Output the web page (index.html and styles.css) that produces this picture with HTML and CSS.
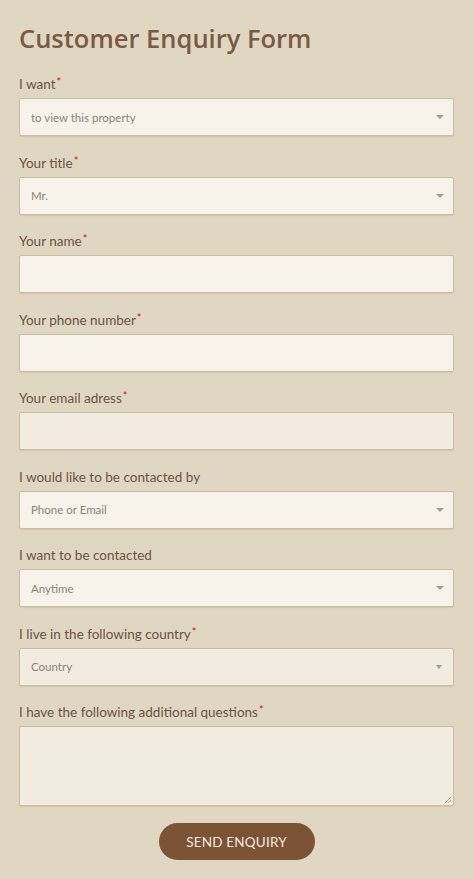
FILE: index.html
```html
<!DOCTYPE html>
<html lang="en">
<head>
<meta charset="utf-8">
<title>Customer Enquiry Form</title>
<link rel="stylesheet" href="styles.css">
</head>
<body>
<form class="form">
  <h1 class="title">Customer Enquiry Form</h1>

  <div class="group">
    <div class="label">I want<span class="req">*</span></div>
    <div class="field select"><span class="value">to view this property</span><span class="caret"></span></div>
  </div>

  <div class="group">
    <div class="label">Your title<span class="req">*</span></div>
    <div class="field select"><span class="value">Mr.</span><span class="caret"></span></div>
  </div>

  <div class="group">
    <div class="label">Your name<span class="req">*</span></div>
    <div class="field"></div>
  </div>

  <div class="group">
    <div class="label">Your phone number<span class="req">*</span></div>
    <div class="field"></div>
  </div>

  <div class="group">
    <div class="label">Your email adress<span class="req">*</span></div>
    <div class="field dim"></div>
  </div>

  <div class="group">
    <div class="label">I would like to be contacted by</div>
    <div class="field select"><span class="value">Phone or Email</span><span class="caret"></span></div>
  </div>

  <div class="group">
    <div class="label">I want to be contacted</div>
    <div class="field select"><span class="value">Anytime</span><span class="caret"></span></div>
  </div>

  <div class="group">
    <div class="label">I live in the following country<span class="req">*</span></div>
    <div class="field select dim"><span class="value">Country</span><span class="caret small"></span></div>
  </div>

  <div class="group">
    <div class="label">I have the following additional questions<span class="req">*</span></div>
    <div class="field area dim"><span class="grip"></span></div>
  </div>

  <div class="actions">
    <button type="button" class="btn">SEND ENQUIRY</button>
  </div>
</form>
</body>
</html>
```

FILE: styles.css
```css
* { box-sizing: border-box; }
html, body { margin: 0; padding: 0; }
body {
  background: #e0d7c2;
  font-family: "Lato", "Noto Sans", sans-serif;
  width: 474px;
  height: 879px;
  overflow: hidden;
}
.form {
  padding: 18px 20px 0 19px;
  display: flex;
  flex-direction: column;
}
.title {
  margin: 0 0 16px 0;
  font-family: "Open Sans", "Noto Sans", sans-serif;
  font-weight: 600;
  font-size: 25.5px;
  line-height: 40px;
  color: #7a5a44;
}
.group {
  display: flex;
  flex-direction: column;
  margin-bottom: 16.5px;
}
.label {
  font-size: 13.5px;
  line-height: 20px;
  height: 20px;
  color: #6d5242;
  margin-bottom: 4px;
}
.req {
  color: #d0111b;
  font-size: 11px;
  line-height: 0;
  position: relative;
  top: -3px;
  margin-left: 1px;
}
.field {
  position: relative;
  height: 38px;
  background: #f7f3eb;
  border: 1px solid #cdbd9f;
  border-radius: 2px;
  box-shadow: 0 1px 1px rgba(120, 95, 60, 0.15);
  display: flex;
  align-items: center;
  padding: 0 9px 0 11px;
}
.field.dim { background: #f1ebe0; }
.field.area { height: 80px; }
.value {
  flex: 1;
  font-size: 11.5px;
  color: #8d8279;
}
.caret {
  width: 0;
  height: 0;
  border-left: 4px solid transparent;
  border-right: 4px solid transparent;
  border-top: 4px solid #a49c94;
}
.caret.small {
  border-left-width: 3px;
  border-right-width: 3px;
  border-top-width: 4px;
  margin-right: 2px;
}
.grip {
  position: absolute;
  right: 2px;
  bottom: 2px;
  width: 6px;
  height: 6px;
  background: linear-gradient(135deg, transparent 45%, #b5a995 45%, #b5a995 55%, transparent 55%, transparent 70%, #b5a995 70%, #b5a995 80%, transparent 80%);
}
.actions {
  display: flex;
  justify-content: center;
  margin-top: 0.5px;
}
.btn {
  width: 156px;
  height: 37px;
  border: none;
  border-radius: 19px;
  background: #7d5336;
  color: #f4ebe0;
  font-family: "Lato", "Noto Sans", sans-serif;
  font-size: 13.5px;
  letter-spacing: 0.2px;
  padding: 0;
}
```
